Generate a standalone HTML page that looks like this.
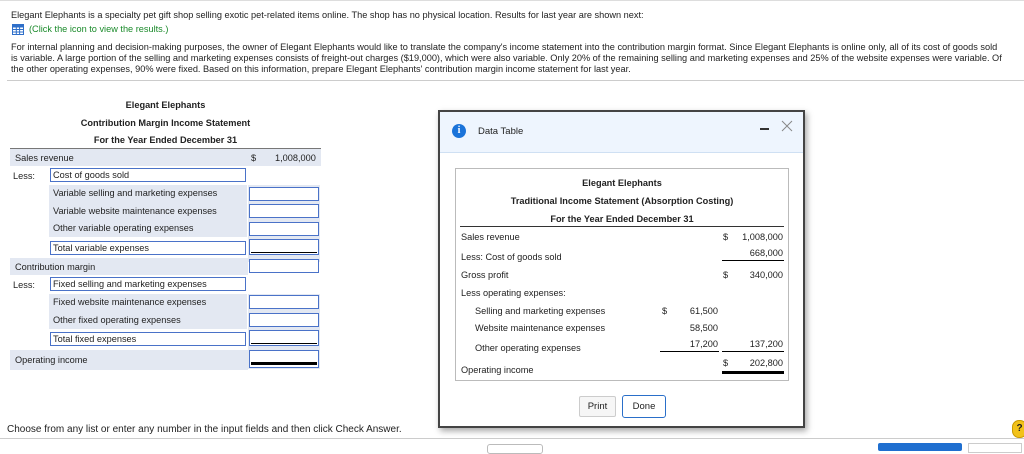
<!DOCTYPE html><html><head><style>
body{margin:0;width:1024px;height:449px;overflow:hidden;background:#fff;font-family:"Liberation Sans",Arial,sans-serif;font-size:9.2px;color:#222;position:relative}
.a{position:absolute;white-space:nowrap}
.bg{position:absolute;background:#e3e8f2}
.in{position:absolute;border:1px solid #4a72c8;background:#fff;box-sizing:border-box}
.b{font-weight:bold}
.r{text-align:right}
.ul{position:absolute;height:1px;background:#000}
</style></head><body>
<div class="a" style="left:0;top:0;width:1024px;height:1px;background:#ddd"></div>
<div class="a" style="left:11px;top:10px">Elegant Elephants is a specialty pet gift shop selling exotic pet-related items online. The shop has no physical location. Results for last year are shown next:</div>
<svg class="a" style="left:12px;top:24px" width="12" height="11" viewBox="0 0 12 11"><rect x="0.5" y="0.5" width="11" height="10" fill="#fff" stroke="#2f6fc9"/><rect x="1" y="1" width="10" height="2.5" fill="#2f6fc9"/><path d="M1 5.5H11M1 8H11M4.3 3V10.5M7.6 3V10.5" stroke="#2f6fc9"/></svg>
<div class="a" style="left:29px;top:24px;color:#1a8a2a">(Click the icon to view the results.)</div>
<div class="a" style="left:11px;top:42px;line-height:11px">For internal planning and decision-making purposes, the owner of Elegant Elephants would like to translate the company's income statement into the contribution margin format. Since Elegant Elephants is online only, all of its cost of goods sold<br>is variable. A large portion of the selling and marketing expenses consists of freight-out charges ($19,000), which were also variable. Only 20% of the remaining selling and marketing expenses and 25% of the website expenses were variable. Of<br>the other operating expenses, 90% were fixed. Based on this information, prepare Elegant Elephants' contribution margin income statement for last year.</div>
<div class="a" style="left:7px;top:80px;width:1017px;height:1px;background:#ccc"></div>

<div class="a b" style="left:10px;width:311px;top:100px;text-align:center">Elegant Elephants</div>
<div class="a b" style="left:10px;width:311px;top:118px;text-align:center">Contribution Margin Income Statement</div>
<div class="a b" style="left:10px;width:311px;top:135px;text-align:center">For the Year Ended December 31</div>
<div class="a" style="left:10px;top:148px;width:311px;height:1px;background:#777"></div>
<div class="bg" style="left:10px;top:149px;width:311px;height:17px"></div>
<div class="a" style="left:15px;top:153px">Sales revenue</div>
<div class="a" style="left:251px;top:153px">$</div>
<div class="a" style="left:275px;top:153px">1,008,000</div>
<div class="a" style="left:13px;top:171px">Less:</div>
<div class="in" style="left:50px;top:168px;width:196px;height:14px"></div><div class="a" style="left:53px;top:170px">Cost of goods sold</div>
<div class="bg" style="left:49px;top:185px;width:198px;height:52px"></div>
<div class="a" style="left:53px;top:188px">Variable selling and marketing expenses</div>
<div class="a" style="left:53px;top:206px">Variable website maintenance expenses</div>
<div class="a" style="left:53px;top:223px">Other variable operating expenses</div>
<div class="bg" style="left:248px;top:185px;width:72px;height:77px"></div>
<div class="in" style="left:249px;top:187px;width:70px;height:14px"></div>
<div class="in" style="left:249px;top:204px;width:70px;height:14px"></div>
<div class="in" style="left:249px;top:222px;width:70px;height:14px"></div>
<div class="in" style="left:50px;top:241px;width:196px;height:14px"></div><div class="a" style="left:53px;top:243px">Total variable expenses</div>
<div class="in" style="left:249px;top:239px;width:70px;height:16px"></div><div class="ul" style="left:251px;top:252px;width:66px"></div>
<div class="bg" style="left:10px;top:258px;width:238px;height:17px"></div>
<div class="a" style="left:15px;top:262px">Contribution margin</div>
<div class="in" style="left:249px;top:259px;width:70px;height:14px"></div>
<div class="a" style="left:13px;top:280px">Less:</div>
<div class="in" style="left:50px;top:277px;width:196px;height:14px"></div><div class="a" style="left:53px;top:279px">Fixed selling and marketing expenses</div>
<div class="bg" style="left:49px;top:294px;width:198px;height:35px"></div>
<div class="bg" style="left:248px;top:294px;width:72px;height:75px"></div>
<div class="a" style="left:53px;top:297px">Fixed website maintenance expenses</div>
<div class="a" style="left:53px;top:315px">Other fixed operating expenses</div>
<div class="in" style="left:249px;top:295px;width:70px;height:14px"></div>
<div class="in" style="left:249px;top:313px;width:70px;height:14px"></div>
<div class="in" style="left:50px;top:332px;width:196px;height:14px"></div><div class="a" style="left:53px;top:334px">Total fixed expenses</div>
<div class="in" style="left:249px;top:330px;width:70px;height:16px"></div><div class="ul" style="left:251px;top:343px;width:66px"></div>
<div class="bg" style="left:10px;top:350px;width:238px;height:20px"></div>
<div class="a" style="left:15px;top:355px">Operating income</div>
<div class="in" style="left:249px;top:350px;width:70px;height:18px"></div><div class="ul" style="left:251px;top:362px;width:66px;height:3px"></div>

<div class="a" style="left:7px;top:424px;font-size:10px">Choose from any list or enter any number in the input fields and then click Check Answer.</div>
<div class="a" style="left:0;top:438px;width:1024px;height:1px;background:#ccc"></div>
<div class="a" style="left:1012px;top:420px;width:13px;height:16px;border-radius:7px;background:#f2c21a;border:1px solid #c99a00;font-size:10px;font-weight:bold;text-align:center;line-height:16px">?</div>
<div class="a" style="left:487px;top:444px;width:54px;height:8px;border:1px solid #bbb;border-radius:3px"></div>
<div class="a" style="left:878px;top:443px;width:84px;height:8px;background:#1f6fd0;border-radius:2px"></div>
<div class="a" style="left:968px;top:443px;width:52px;height:8px;border:1px solid #ccc"></div>

<div class="a" style="left:438px;top:110px;width:367px;height:318px;border:2px solid #444;box-sizing:border-box;background:#fff;box-shadow:2px 3px 6px rgba(0,0,0,.35)"></div>
<div class="a" style="left:440px;top:112px;width:363px;height:40px;background:#eef5fe;border-bottom:1px solid #cfe0f3"></div>
<div class="a" style="left:452px;top:124px;width:14px;height:14px;border-radius:7px;background:#1a73d9;color:#fff;font-weight:bold;font-size:10px;text-align:center;line-height:14px;font-family:'Liberation Serif',serif">i</div>
<div class="a" style="left:478px;top:126px;font-size:9.5px">Data Table</div>
<div class="a" style="left:760px;top:128px;width:9px;height:2px;background:#333"></div>
<svg class="a" style="left:781px;top:120px" width="12" height="12"><path d="M1 1L11 11M11 1L1 11" stroke="#888" stroke-width="1"/></svg>
<div class="a" style="left:455px;top:168px;width:334px;height:213px;border:1px solid #bbb;box-sizing:border-box"></div>
<div class="a b" style="left:455px;width:334px;top:178px;text-align:center">Elegant Elephants</div>
<div class="a b" style="left:455px;width:334px;top:196px;text-align:center">Traditional Income Statement (Absorption Costing)</div>
<div class="a b" style="left:455px;width:334px;top:214px;text-align:center">For the Year Ended December 31</div>
<div class="a" style="left:460px;top:226px;width:324px;height:1px;background:#333"></div>
<div class="a" style="left:461px;top:232px">Sales revenue</div>
<div class="a" style="left:723px;top:232px">$</div><div class="a r" style="left:730px;width:53px;top:232px">1,008,000</div>
<div class="a" style="left:461px;top:252px">Less: Cost of goods sold</div>
<div class="a r" style="left:730px;width:53px;top:248px">668,000</div>
<div class="ul" style="left:722px;top:260px;width:62px"></div>
<div class="a" style="left:461px;top:270px">Gross profit</div>
<div class="a" style="left:723px;top:270px">$</div><div class="a r" style="left:730px;width:53px;top:270px">340,000</div>
<div class="a" style="left:461px;top:288px">Less operating expenses:</div>
<div class="a" style="left:475px;top:306px">Selling and marketing expenses</div>
<div class="a" style="left:662px;top:306px">$</div><div class="a r" style="left:670px;width:48px;top:306px">61,500</div>
<div class="a" style="left:475px;top:323px">Website maintenance expenses</div>
<div class="a r" style="left:670px;width:48px;top:323px">58,500</div>
<div class="a" style="left:475px;top:343px">Other operating expenses</div>
<div class="a r" style="left:670px;width:48px;top:339px">17,200</div>
<div class="a r" style="left:730px;width:53px;top:339px">137,200</div>
<div class="ul" style="left:660px;top:351px;width:59px"></div>
<div class="ul" style="left:722px;top:351px;width:62px"></div>
<div class="a" style="left:461px;top:365px">Operating income</div>
<div class="a" style="left:723px;top:358px">$</div><div class="a r" style="left:730px;width:53px;top:358px">202,800</div>
<div class="ul" style="left:722px;top:371px;width:62px;height:3px"></div>
<div class="a" style="left:579px;top:396px;width:37px;height:21px;border:1px solid #ccc;border-radius:2px;background:#f6f6f6;box-sizing:border-box;text-align:center;line-height:19px;font-size:9.5px">Print</div>
<div class="a" style="left:622px;top:395px;width:44px;height:23px;border:1px solid #2a6fc9;border-radius:3px;background:#fff;box-sizing:border-box;text-align:center;line-height:21px;font-size:9.5px">Done</div>
</body></html>
